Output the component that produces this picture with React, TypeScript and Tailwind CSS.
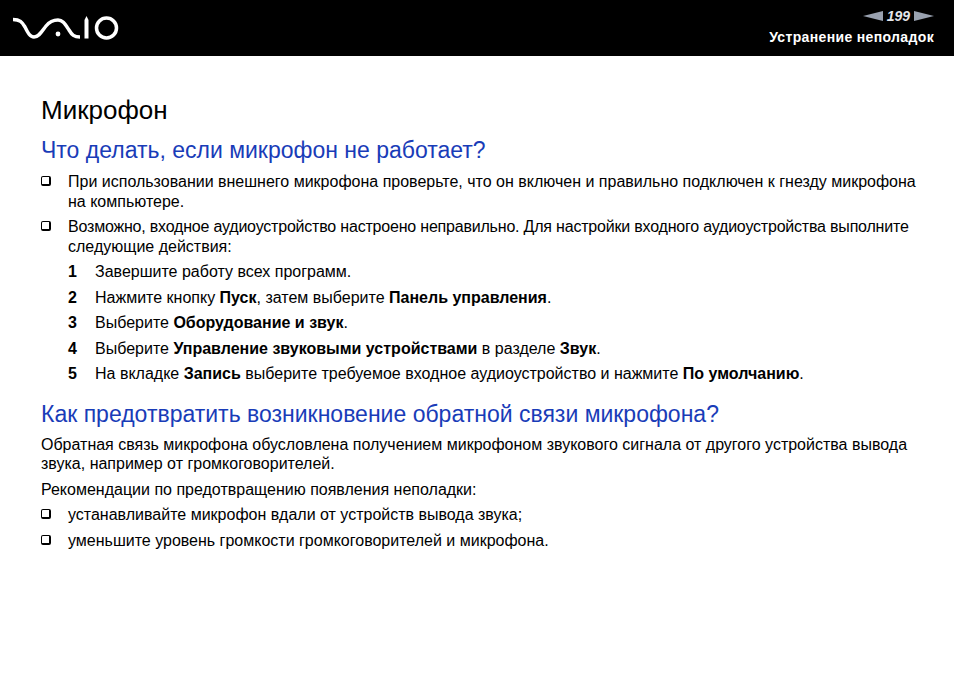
function Logo() {
  // drawn in page coordinates: viewBox starts where the svg sits in the header
  return (
    <svg viewBox="10 14 112 28" className="h-7 w-28" fill="none" stroke="white" strokeWidth="3.5">
      <path d="M13 19.5 C20 19.5 22 22 25 27 C28 33 30 37 34 37 C39 37 42 31 46 26 C50 21 54 20 58 20 C63 20 65 24 69 30 C72 35 74 37 80 37" />
      <circle cx="58" cy="34" r="2.4" fill="white" stroke="none" />
      <path d="M86.5 16 L88.5 20 V38.5 H84.5 V20 Z" fill="white" stroke="none" />
      <circle cx="106.5" cy="28" r="10" />
    </svg>
  );
}

function Bullet({ children }: { children: React.ReactNode }) {
  return (
    <li className="flex">
      <span className="w-6.75 shrink-0 pt-1">
        <span className="block size-2.5 rounded-xs border border-b-2 border-r-2 border-black" />
      </span>
      <p>{children}</p>
    </li>
  );
}

function Step({ n, children }: { n: number; children: React.ReactNode }) {
  return (
    <li className="flex">
      <span className="w-6.75 shrink-0 font-bold">{n}</span>
      <p>{children}</p>
    </li>
  );
}

export default function App() {
  return (
    <div className="min-h-screen bg-white font-['Liberation_Sans',Arial,sans-serif] text-base leading-[19.5px] text-black">
      <header className="flex h-14 items-center justify-between bg-black pl-2.5 pr-5 text-white">
        <Logo />
        <div className="flex flex-col items-end gap-px pb-1 text-sm font-bold tracking-wide">
          <div className="flex items-center gap-1 tracking-normal text-gray-200">
            <svg viewBox="0 0 20 10" className="h-2.5 w-5 fill-gray-400"><path d="M0 5 20 0V10Z" /></svg>
            <span className="italic">199</span>
            <svg viewBox="0 0 20 10" className="h-2.5 w-5 fill-gray-400"><path d="M20 5 0 0V10Z" /></svg>
          </div>
          <span>Устранение неполадок</span>
        </div>
      </header>

      <main className="ml-px pl-10 pr-8 pt-9">
        <h1 className="text-[26px] leading-9">Микрофон</h1>
        <h2 className="mt-1.5 text-[23px] leading-8 text-blue-800">Что делать, если микрофон не работает?</h2>

        <ul className="mt-1.5 space-y-1.5">
          <Bullet>При использовании внешнего микрофона проверьте, что он включен и правильно подключен к гнезду микрофона на компьютере.</Bullet>
          <Bullet>
            <span className="tracking-[-0.2px]">Возможно, входное аудиоустройство настроено неправильно. Для настройки входного аудиоустройства выполните</span>{" "}
            следующие действия:
          </Bullet>
        </ul>

        <ol className="ml-6.75 mt-1.5 space-y-1.5">
          <Step n={1}>Завершите работу всех программ.</Step>
          <Step n={2}>Нажмите кнопку <b>Пуск</b>, затем выберите <b>Панель управления</b>.</Step>
          <Step n={3}>Выберите <b>Оборудование и звук</b>.</Step>
          <Step n={4}>Выберите <b>Управление звуковыми устройствами</b> в разделе <b>Звук</b>.</Step>
          <Step n={5}>На вкладке <b>Запись</b> выберите требуемое входное аудиоустройство и нажмите <b>По умолчанию</b>.</Step>
        </ol>

        <h2 className="mt-3.5 text-[23px] leading-8 text-blue-800">Как предотвратить возникновение обратной связи микрофона?</h2>

        <p className="mt-1.25">Обратная связь микрофона обусловлена получением микрофоном звукового сигнала от другого устройства вывода звука, например от громкоговорителей.</p>
        <p className="mt-1.5">Рекомендации по предотвращению появления неполадки:</p>

        <ul className="mt-1.5 space-y-1.5">
          <Bullet>устанавливайте микрофон вдали от устройств вывода звука;</Bullet>
          <Bullet>уменьшите уровень громкости громкоговорителей и микрофона.</Bullet>
        </ul>
      </main>
    </div>
  );
}
